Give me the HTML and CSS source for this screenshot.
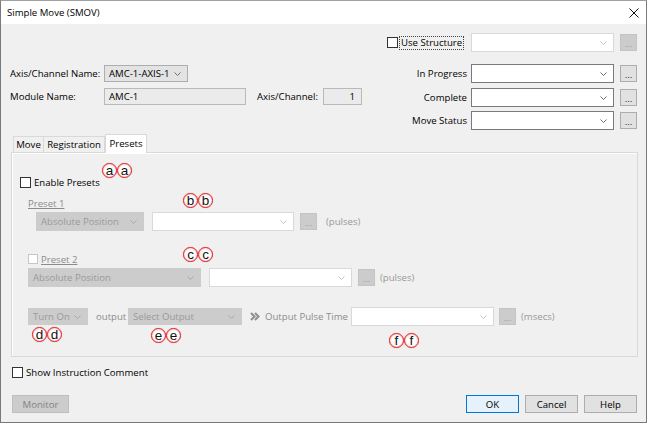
FILE: index.html
```html
<!DOCTYPE html>
<html>
<head>
<meta charset="utf-8">
<link rel="stylesheet" href="styles.css">
</head>
<body>
<div class="window">
  <div class="titlebar">
    <span class="title">Simple Move (SMOV)</span>
    <svg class="close" width="10" height="10" viewBox="0 0 10 10"><path d="M0.5 0.5 L9.5 9.5 M9.5 0.5 L0.5 9.5" stroke="#111" stroke-width="1" fill="none"/></svg>
  </div>
  <div class="content">
    <div class="top">
      <div class="left">
        <div class="lrow">
          <span class="llabel">Axis/Channel Name:</span>
          <div class="combo gray w84"><span class="ctext">AMC-1-AXIS-1</span><svg class="chev" width="7" height="4" viewBox="0 0 7 4"><path d="M0.5 0.5 L3.5 3.5 L6.5 0.5" stroke="#6e6e6e" fill="none"/></svg></div>
        </div>
        <div class="lrow second">
          <span class="llabel">Module Name:</span>
          <div class="field w142">AMC-1</div>
          <span class="mlabel">Axis/Channel:</span>
          <div class="field w39 num">1</div>
        </div>
      </div>
      <div class="right">
        <div class="rrow r1">
          <div class="rcell">
            <span class="chk"></span>
            <span class="focus">Use Structure</span>
          </div>
          <div class="combo white dis w143"><svg class="chev" width="7" height="4" viewBox="0 0 7 4"><path d="M0.5 0.5 L3.5 3.5 L6.5 0.5" stroke="#c4c4c4" fill="none"/></svg></div>
          <div class="dots dis">...</div>
        </div>
        <div class="rrow r2">
          <span class="rlabel">In Progress</span>
          <div class="combo white w143"><svg class="chev" width="7" height="4" viewBox="0 0 7 4"><path d="M0.5 0.5 L3.5 3.5 L6.5 0.5" stroke="#6e6e6e" fill="none"/></svg></div>
          <div class="dots">...</div>
        </div>
        <div class="rrow r3">
          <span class="rlabel">Complete</span>
          <div class="combo white w143"><svg class="chev" width="7" height="4" viewBox="0 0 7 4"><path d="M0.5 0.5 L3.5 3.5 L6.5 0.5" stroke="#6e6e6e" fill="none"/></svg></div>
          <div class="dots">...</div>
        </div>
        <div class="rrow r4">
          <span class="rlabel">Move Status</span>
          <div class="combo white w143"><svg class="chev" width="7" height="4" viewBox="0 0 7 4"><path d="M0.5 0.5 L3.5 3.5 L6.5 0.5" stroke="#6e6e6e" fill="none"/></svg></div>
          <div class="dots">...</div>
        </div>
      </div>
    </div>

    <div class="tabs">
      <div class="tab t-move">Move</div>
      <div class="tab t-reg">Registration</div>
      <div class="tab sel">Presets</div>
    </div>

    <div class="panel">
      <div class="prow enable">
        <span class="chk"></span>
        <span class="lbl">Enable Presets</span>
      </div>
      <div class="prow plabel1">
        <span class="plink">Preset 1</span>
      </div>
      <div class="crow row1">
        <div class="combo disd w108"><span class="ctext">Absolute Position</span><svg class="chev" width="7" height="4" viewBox="0 0 7 4"><path d="M0.5 0.5 L3.5 3.5 L6.5 0.5" stroke="#a9a9a9" fill="none"/></svg></div>
        <div class="combo white dis w142 gap8"><svg class="chev" width="7" height="4" viewBox="0 0 7 4"><path d="M0.5 0.5 L3.5 3.5 L6.5 0.5" stroke="#c4c4c4" fill="none"/></svg></div>
        <div class="dots dis">...</div>
        <span class="unit u1">(pulses)</span>
      </div>
      <div class="prow plabel2">
        <span class="chk dis"></span>
        <span class="plink">Preset 2</span>
      </div>
      <div class="crow row2">
        <div class="combo disd w173"><span class="ctext">Absolute Position</span><svg class="chev" width="7" height="4" viewBox="0 0 7 4"><path d="M0.5 0.5 L3.5 3.5 L6.5 0.5" stroke="#a9a9a9" fill="none"/></svg></div>
        <div class="combo white dis w143 gap8"><svg class="chev" width="7" height="4" viewBox="0 0 7 4"><path d="M0.5 0.5 L3.5 3.5 L6.5 0.5" stroke="#c4c4c4" fill="none"/></svg></div>
        <div class="dots dis">...</div>
        <span class="unit u2">(pulses)</span>
      </div>
      <div class="crow row3">
        <div class="combo disd w60 short"><span class="ctext">Turn On</span><svg class="chev" width="7" height="4" viewBox="0 0 7 4"><path d="M0.5 0.5 L3.5 3.5 L6.5 0.5" stroke="#a9a9a9" fill="none"/></svg></div>
        <span class="gtext out">output</span>
        <div class="combo disd w114 short"><span class="ctext">Select Output</span><svg class="chev" width="7" height="4" viewBox="0 0 7 4"><path d="M0.5 0.5 L3.5 3.5 L6.5 0.5" stroke="#a9a9a9" fill="none"/></svg></div>
        <svg class="dbl" width="10" height="9" viewBox="0 0 10 9"><path d="M1 1 L4.5 4.5 L1 8 M5 1 L8.5 4.5 L5 8" stroke="#8e8e8e" stroke-width="2" fill="none"/></svg>
        <span class="gtext opt">Output Pulse Time</span>
        <div class="combo white dis w143"><svg class="chev" width="7" height="4" viewBox="0 0 7 4"><path d="M0.5 0.5 L3.5 3.5 L6.5 0.5" stroke="#c4c4c4" fill="none"/></svg></div>
        <div class="dots dis d3">...</div>
        <span class="unit u3">(msecs)</span>
      </div>

      <div class="badges b-a"><span class="badge">a</span><span class="badge">a</span></div>
      <div class="badges b-b"><span class="badge">b</span><span class="badge">b</span></div>
      <div class="badges b-c"><span class="badge">c</span><span class="badge">c</span></div>
      <div class="badges b-d"><span class="badge">d</span><span class="badge">d</span></div>
      <div class="badges b-e"><span class="badge">e</span><span class="badge">e</span></div>
      <div class="badges b-f"><span class="badge">f</span><span class="badge">f</span></div>
    </div>

    <div class="showrow">
      <span class="chk"></span>
      <span class="lbl">Show Instruction Comment</span>
    </div>

    <div class="btnrow">
      <div class="btn disb">Monitor</div>
      <div class="btngroup">
        <div class="btn ok">OK</div>
        <div class="btn">Cancel</div>
        <div class="btn">Help</div>
      </div>
    </div>
  </div>
</div>
</body>
</html>
```

FILE: styles.css
```css
* { box-sizing: border-box; }

body {
  margin: 0;
  background: #ffffff;
  font-family: "Open Sans", "Noto Sans", sans-serif;
  font-size: 9.6px;
  color: #000;
}

.window {
  width: 647px;
  height: 423px;
  border: 1px solid #7a7a7a;
  border-top-color: #a0a0a0;
  background: #f0f0f0;
  display: flex;
  flex-direction: column;
  overflow: hidden;
}

.titlebar {
  height: 23px;
  flex: none;
  background: #ffffff;
  display: flex;
  align-items: center;
  justify-content: space-between;
  padding: 0 7px 0 6px;
}

.content {
  padding: 0 9px 0 9px;
}

.top {
  display: flex;
}

.left {
  width: 373px;
  padding-top: 41px;
}

.lrow {
  display: flex;
  align-items: center;
  height: 17px;
}
.lrow.second { margin-top: 6px; }

.llabel { width: 94px; }

.mlabel {
  width: 66px;
  margin-left: 11px;
}

.field {
  height: 17px;
  border: 1px solid #b9b9b9;
  background: #ebebeb;
  display: flex;
  align-items: center;
  padding: 0 4px;
}
.field.num { justify-content: flex-end; padding-right: 6px; }

.w39 { width: 39px; }
.w60 { width: 60px; }
.w84 { width: 84px; }
.w108 { width: 108px; }
.w114 { width: 114px; }
.w142 { width: 142px; }
.w143 { width: 143px; }
.w173 { width: 173px; }

.combo {
  height: 19px;
  display: flex;
  align-items: center;
  justify-content: space-between;
  padding: 0 6px 0 4px;
  flex: none;
}
.combo.gray {
  height: 17px;
  background: #e3e3e3;
  border: 1px solid #adadad;
}
.combo.white {
  background: #ffffff;
  border: 1px solid #7a7a7a;
  justify-content: flex-end;
}
.combo.white.dis { border-color: #d9d9d9; }
.combo.disd {
  background: #cccccc;
  border: 1px solid #cccccc;
  color: #9a9a9a;
}
.combo.short { height: 17px; }
.gap8 { margin-left: 8px; }

.right { width: 254px; }

.rrow {
  display: flex;
  align-items: center;
  height: 19px;
}
.r1 { margin-top: 9px; }
.r2 { margin-top: 12px; }
.r3 { margin-top: 5px; }
.r4 { margin-top: 4px; }

.rcell {
  width: 84px;
  display: flex;
  align-items: center;
  padding-left: 4px;
}
.rlabel {
  width: 84px;
  text-align: right;
}
.rrow .combo { margin-left: 4px; }

.focus {
  margin-left: 1px;
  border: 1px dotted #444;
  padding: 0 1px;
  line-height: 12px;
}

.dots {
  width: 17px;
  height: 17px;
  margin-left: 6px;
  background: #e1e1e1;
  border: 1px solid #adadad;
  display: flex;
  align-items: flex-end;
  justify-content: center;
  font-family: "Liberation Sans", Arial, sans-serif;
  font-size: 9px;
  line-height: 12px;
  letter-spacing: 0;
  color: #222;
  flex: none;
}
.dots.dis {
  background: #cccccc;
  border-color: #c4c4c4;
  color: #9a9a9a;
}

.chk {
  width: 11px;
  height: 11px;
  border: 1px solid #333;
  background: #fff;
  flex: none;
}
.chk.dis { border-color: #c6c6c6; }

.tabs {
  margin-top: 4px;
  margin-left: 3px;
  height: 18px;
  display: flex;
  align-items: flex-end;
}
.tab {
  height: 16px;
  border: 1px solid #d9d9d9;
  border-bottom: none;
  background: #f0f0f0;
  display: flex;
  align-items: center;
  justify-content: center;
}
.t-move { width: 31px; }
.t-reg { width: 61px; border-left: none; }
.tab.sel {
  width: 42px;
  height: 19px;
  margin-bottom: -1px;
  background: #ffffff;
  position: relative;
  z-index: 1;
  padding-bottom: 2px;
}

.panel {
  position: relative;
  width: 627px;
  height: 205px;
  margin-left: 1px;
  border: 1px solid #d9d9d9;
  box-shadow: inset 1px 1px 0 #ffffff;
  padding: 21px 0 0 8px;
}

.prow {
  display: flex;
  align-items: center;
  height: 16px;
}
.prow .lbl { margin-left: 3px; }
.plabel1 { margin-top: 5px; padding-left: 8px; }
.plabel2 { margin-top: 20px; padding-left: 8px; }
.plabel2 .chk { width: 10px; height: 10px; }
.plink {
  color: #8c8c8c;
  text-decoration: underline;
}
.plabel2 .plink { margin-left: 3px; }

.crow {
  display: flex;
  align-items: center;
  height: 19px;
}
.row1 { margin-top: 1px; padding-left: 16px; }
.row2 { margin-top: 1px; padding-left: 8px; }
.row3 { margin-top: 20px; padding-left: 8px; }

.unit { color: #999999; }
.u1 { margin-left: 9px; }
.u2 { margin-left: 5px; }
.u3 { margin-left: 5px; }
.d3 { margin-left: 5px; }

.gtext { color: #8c8c8c; }
.out { width: 40px; padding-left: 8px; }
.dbl { margin-left: 8px; flex: none; }
.opt { width: 91px; padding-left: 5px; }

.badges {
  position: absolute;
  display: flex;
}
.badge {
  width: 15px;
  height: 15px;
  border-radius: 50%;
  background: #ffffff;
  border: 1.5px solid #e0242b;
  box-shadow: inset 0 0 2px #f4a0a0, 0 0 1px rgba(200,0,0,0.4);
  display: flex;
  align-items: center;
  justify-content: center;
  font-family: "Liberation Sans", Arial, sans-serif;
  font-size: 13.5px;
  line-height: 13px;
  color: #111;
  padding-bottom: 1px;
}
.b-a { left: 90px; top: 10px; }
.b-b { left: 171px; top: 40px; }
.b-c { left: 171px; top: 94px; }
.b-d { left: 20px; top: 174px; }
.b-e { left: 139px; top: 175px; }
.b-f { left: 377px; top: 180px; }

.showrow {
  display: flex;
  align-items: center;
  height: 16px;
  margin-top: 7px;
  padding-left: 2px;
}
.showrow .lbl { margin-left: 3px; }

.btnrow {
  margin-top: 15px;
  display: flex;
  justify-content: space-between;
  padding-left: 2px;
}
.btngroup {
  display: flex;
  gap: 6px;
}
.btn {
  width: 53px;
  height: 18px;
  background: #e1e1e1;
  border: 1px solid #adadad;
  display: flex;
  align-items: center;
  justify-content: center;
}
.btn.ok {
  background: #e5f1fb;
  border-color: #0078d7;
}
.btn.disb {
  width: 57px;
  background: #cccccc;
  border-color: #bfbfbf;
  color: #838383;
}
```
